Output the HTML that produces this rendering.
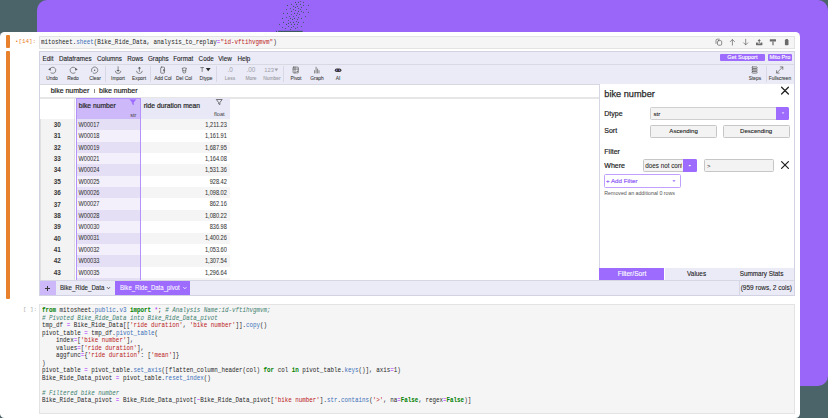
<!DOCTYPE html>
<html><head><meta charset="utf-8">
<style>
*{box-sizing:border-box;margin:0;padding:0}
html,body{width:828px;height:418px;overflow:hidden;background:#4b6469;font-family:"Liberation Sans",sans-serif;color:#333}
.a{position:absolute}
#purple{left:37px;top:-0.5px;width:791px;height:386px;border-radius:10px;background:#9a66fa}
#card{left:0;top:32px;width:800px;height:386.3px;border-radius:4.5px;background:#fff}
.obar{left:6px;width:4px;background:#e8802c;border-radius:1px}
.mono{font-family:"Liberation Mono",monospace}
.cell{background:#f5f5f5;border:1px solid #e3e3e3}
.code{font-size:6.4px;line-height:7.5px;white-space:pre;color:#262626;transform:scaleX(0.917);transform-origin:0 0}
.kw{color:#008000;font-weight:bold}
.nm{color:#3a6fb8}
.st{color:#ba2121}
.op{color:#aa22ff}
.cm{color:#3d8070;font-style:italic}
.t{white-space:nowrap;line-height:1}

.mito{left:39px;top:51.2px;width:755.7px;height:244.4px;border:1px solid #d2d2e2;background:#fff}
.menubar{left:40px;top:52.2px;width:753.7px;height:12.8px;background:#ebebf7;border-bottom:0.9px solid #d8d8e2}
.toolbar{left:40px;top:65px;width:753.7px;height:19.8px;background:#ebebf7;border-bottom:1px solid #d8d8e2}
.menu{top:55.6px;font-size:6.3px;color:#1c1c1c;-webkit-text-stroke:0.1px currentColor}
.tl{top:75.5px;width:40px;text-align:center;font-size:5.7px;color:#3a3a3a;transform:scaleX(0.86);-webkit-text-stroke:0.08px currentColor}
.dis{color:#98989f}
.sep{width:0.8px;background:#d8d8e6;top:66px;height:16px}
.ic{position:absolute;overflow:visible}
.btnp{background:#9d6cff;color:#fff;font-size:5.6px;text-align:center;line-height:7.6px;border-radius:1px;-webkit-text-stroke:0.12px currentColor}

.fbar{left:50.7px;top:87.2px;font-size:7px;color:#1e1e1e;-webkit-text-stroke:0.18px currentColor}
.gh{font-size:6.75px;color:#2a2a2a;-webkit-text-stroke:0.2px currentColor}
.gd{font-size:5.65px;color:#333;transform:scaleY(1.13);-webkit-text-stroke:0.04px currentColor}
.idx{font-size:6.4px;font-weight:bold;color:#383838;width:35px;text-align:center;left:39.8px}
</style></head><body>
<div id="purple" class="a"></div>
<svg class="a" style="left:0;top:0" width="828" height="418" viewBox="0 0 828 418"><g fill="#3f5a60"><circle cx="300.4" cy="1.5" r="0.55"/><circle cx="295.5" cy="2.4" r="0.55"/><circle cx="298.5" cy="2.4" r="0.55"/><circle cx="303.4" cy="2.4" r="0.55"/><circle cx="291.4" cy="4.4" r="0.55"/><circle cx="296.5" cy="4.4" r="0.55"/><circle cx="300.4" cy="4.4" r="0.55"/><circle cx="287.5" cy="5.4" r="0.55"/><circle cx="303.4" cy="5.4" r="0.55"/><circle cx="308.4" cy="5.4" r="0.55"/><circle cx="293.5" cy="6.4" r="0.55"/><circle cx="297.4" cy="6.4" r="0.55"/><circle cx="295.5" cy="7.4" r="0.55"/><circle cx="301.4" cy="7.4" r="0.55"/><circle cx="290.4" cy="8.5" r="0.55"/><circle cx="298.5" cy="8.5" r="0.55"/><circle cx="286.5" cy="9.5" r="0.55"/><circle cx="293.5" cy="9.5" r="0.55"/><circle cx="300.4" cy="9.5" r="0.55"/><circle cx="306.4" cy="9.5" r="0.55"/><circle cx="295.5" cy="10.5" r="0.55"/><circle cx="291.4" cy="11.4" r="0.55"/><circle cx="298.5" cy="11.4" r="0.55"/><circle cx="301.4" cy="11.4" r="0.55"/><circle cx="303.4" cy="12.4" r="0.55"/><circle cx="308.4" cy="12.4" r="0.55"/><circle cx="283.5" cy="13.4" r="0.55"/><circle cx="287.5" cy="13.4" r="0.55"/><circle cx="294.5" cy="13.4" r="0.55"/><circle cx="297.4" cy="13.4" r="0.55"/><circle cx="291.4" cy="14.5" r="0.55"/><circle cx="299.5" cy="14.5" r="0.55"/><circle cx="296.5" cy="15.5" r="0.55"/><circle cx="289.4" cy="16.5" r="0.55"/><circle cx="293.5" cy="16.5" r="0.55"/><circle cx="305.5" cy="16.5" r="0.55"/><circle cx="286.5" cy="17.5" r="0.55"/><circle cx="298.5" cy="17.5" r="0.55"/><circle cx="282.5" cy="18.4" r="0.55"/><circle cx="290.4" cy="18.4" r="0.55"/><circle cx="294.5" cy="18.4" r="0.55"/><circle cx="301.4" cy="18.4" r="0.55"/><circle cx="292.5" cy="19.4" r="0.55"/><circle cx="297.4" cy="19.4" r="0.55"/><circle cx="288.5" cy="20.5" r="0.55"/><circle cx="296.5" cy="21.5" r="0.55"/><circle cx="283.5" cy="22.4" r="0.55"/><circle cx="290.4" cy="22.4" r="0.55"/><circle cx="293.5" cy="22.4" r="0.55"/><circle cx="298.5" cy="22.4" r="0.55"/><circle cx="303.4" cy="22.4" r="0.55"/><circle cx="288.5" cy="23.4" r="0.55"/><circle cx="279.4" cy="24.4" r="0.55"/><circle cx="286.5" cy="24.4" r="0.55"/><circle cx="291.4" cy="24.4" r="0.55"/><circle cx="294.5" cy="24.4" r="0.55"/><circle cx="297.4" cy="24.4" r="0.55"/><circle cx="288.5" cy="26.5" r="0.55"/><circle cx="293.5" cy="26.5" r="0.55"/><circle cx="301.4" cy="26.5" r="0.55"/><circle cx="282.5" cy="27.5" r="0.55"/><circle cx="291.4" cy="27.5" r="0.55"/><circle cx="297.4" cy="27.5" r="0.55"/><circle cx="285.4" cy="28.5" r="0.55"/><circle cx="295.5" cy="28.5" r="0.55"/><circle cx="290.4" cy="29.5" r="0.55"/><circle cx="276.5" cy="31.4" r="0.55"/><rect x="278.2" y="30.8" width="24.5" height="1.2"/></g></svg>
<div id="card" class="a"></div>

<!-- cell 1 -->
<div class="a obar" style="top:35.4px;height:13px"></div>
<div class="a obar" style="top:51.2px;height:248px"></div>
<div class="a mono t" style="left:15px;top:38.5px;font-size:5.87px;color:#e8802c">•[14]:</div>
<div class="a cell" style="left:39px;top:35.7px;width:755.7px;height:12.9px"></div>
<div class="a mono code t" style="left:41.2px;top:39.8px">mitosheet.<span class="nm">sheet</span>(Bike_Ride_Data, analysis_to_replay<span class="op">=</span><span class="st">"id-vftihvgmvm"</span>)</div>


<!-- mito -->
<div class="a mito"></div>
<div class="a menubar"></div>
<div class="a toolbar"></div>
<div class="a t menu" style="left:42.6px">Edit</div>
<div class="a t menu" style="left:59px">Dataframes</div>
<div class="a t menu" style="left:97px">Columns</div>
<div class="a t menu" style="left:127.3px">Rows</div>
<div class="a t menu" style="left:147.9px">Graphs</div>
<div class="a t menu" style="left:173.2px">Format</div>
<div class="a t menu" style="left:198.6px">Code</div>
<div class="a t menu" style="left:218.2px">View</div>
<div class="a t menu" style="left:237.4px">Help</div>
<div class="a t tl" style="left:32.3px">Undo</div>
<div class="a t tl" style="left:53.4px">Redo</div>
<div class="a t tl" style="left:74.6px">Clear</div>
<div class="a t tl" style="left:98.0px">Import</div>
<div class="a t tl" style="left:119.4px">Export</div>
<div class="a t tl" style="left:143.2px">Add Col</div>
<div class="a t tl" style="left:164.3px">Del Col</div>
<div class="a t tl" style="left:185.5px">Dtype</div>
<div class="a t tl dis" style="left:209.6px">Less</div>
<div class="a t tl dis" style="left:231.3px">More</div>
<div class="a t tl dis" style="left:251.6px">Number</div>
<div class="a t tl" style="left:275.6px">Pivot</div>
<div class="a t tl" style="left:296.7px">Graph</div>
<div class="a t tl" style="left:318.0px">AI</div>
<div class="a t tl" style="left:734.5px">Steps</div>
<div class="a t tl" style="left:759.9px">Fullscreen</div>
<div class="a sep" style="left:105.4px"></div>
<div class="a sep" style="left:150px"></div>
<div class="a sep" style="left:216.4px"></div>
<div class="a sep" style="left:282.9px"></div>
<div class="a sep" style="left:765.7px"></div>
<div class="a btnp" style="left:720.1px;top:53.7px;width:44.7px;height:7.6px">Get Support</div>
<div class="a btnp" style="left:767.7px;top:53.7px;width:24.4px;height:7.6px">Mito Pro</div>

<div class="a t" style="left:227.4px;top:67.3px;font-size:6.4px;color:#a0a0a8">.0</div>
<div class="a t" style="left:246.4px;top:67.3px;font-size:6.4px;color:#a0a0a8">.00</div>
<div class="a t" style="left:264.2px;top:67.9px;font-size:5.8px;color:#a0a0a8">123</div>
<!-- formula bar -->
<div class="a t fbar">bike number</div>
<div class="a" style="left:93.9px;top:88.9px;width:0.6px;height:3.8px;background:#888"></div>
<div class="a t fbar" style="left:99px">bike number</div>
<!-- grid -->
<div class="a" style="left:40px;top:97.3px;width:559.4px;height:1.3px;background:#e6e6e6"></div>
<div class="a" style="left:74.3px;top:98.4px;width:0.8px;height:21px;background:#e6e6e6"></div>
<div class="a" style="left:39.5px;top:119px;width:35.6px;height:161.3px;background:#f3f3f3;border-right:0.8px solid #dedede;border-left:0.6px solid #e0e0e0"></div>
<div class="a" style="left:76px;top:98.4px;width:65px;height:20.3px;background:#cdb9fa"></div>
<div class="a" style="left:141px;top:98.4px;width:88.8px;height:20.3px;background:#e8e8f6"></div>
<div class="a" style="left:76px;top:118.85px;width:65px;height:11.37px;background:#e5dff6"></div>
<div class="a" style="left:141px;top:118.85px;width:88.8px;height:11.37px;background:#f5f5f5"></div>
<div class="a t idx" style="top:121.94px">30</div>
<div class="a t gd" style="left:78.5px;top:122.78px">W00017</div>
<div class="a t gd" style="left:140px;width:86.9px;text-align:right;top:122.78px">1,211.23</div>
<div class="a" style="left:76px;top:130.22px;width:65px;height:11.37px;background:#f3f0fc"></div>
<div class="a" style="left:141px;top:130.22px;width:88.8px;height:11.37px;background:#fff"></div>
<div class="a t idx" style="top:133.31px">31</div>
<div class="a t gd" style="left:78.5px;top:134.16px">W00018</div>
<div class="a t gd" style="left:140px;width:86.9px;text-align:right;top:134.16px">1,161.91</div>
<div class="a" style="left:76px;top:141.59px;width:65px;height:11.37px;background:#e5dff6"></div>
<div class="a" style="left:141px;top:141.59px;width:88.8px;height:11.37px;background:#f5f5f5"></div>
<div class="a t idx" style="top:144.68px">32</div>
<div class="a t gd" style="left:78.5px;top:145.53px">W00019</div>
<div class="a t gd" style="left:140px;width:86.9px;text-align:right;top:145.53px">1,687.95</div>
<div class="a" style="left:76px;top:152.96px;width:65px;height:11.37px;background:#f3f0fc"></div>
<div class="a" style="left:141px;top:152.96px;width:88.8px;height:11.37px;background:#fff"></div>
<div class="a t idx" style="top:156.04px">33</div>
<div class="a t gd" style="left:78.5px;top:156.89px">W00021</div>
<div class="a t gd" style="left:140px;width:86.9px;text-align:right;top:156.89px">1,164.08</div>
<div class="a" style="left:76px;top:164.33px;width:65px;height:11.37px;background:#e5dff6"></div>
<div class="a" style="left:141px;top:164.33px;width:88.8px;height:11.37px;background:#f5f5f5"></div>
<div class="a t idx" style="top:167.41px">34</div>
<div class="a t gd" style="left:78.5px;top:168.26px">W00024</div>
<div class="a t gd" style="left:140px;width:86.9px;text-align:right;top:168.26px">1,531.36</div>
<div class="a" style="left:76px;top:175.70px;width:65px;height:11.37px;background:#f3f0fc"></div>
<div class="a" style="left:141px;top:175.70px;width:88.8px;height:11.37px;background:#fff"></div>
<div class="a t idx" style="top:178.78px">35</div>
<div class="a t gd" style="left:78.5px;top:179.63px">W00025</div>
<div class="a t gd" style="left:140px;width:86.9px;text-align:right;top:179.63px">928.42</div>
<div class="a" style="left:76px;top:187.07px;width:65px;height:11.37px;background:#e5dff6"></div>
<div class="a" style="left:141px;top:187.07px;width:88.8px;height:11.37px;background:#f5f5f5"></div>
<div class="a t idx" style="top:190.16px">36</div>
<div class="a t gd" style="left:78.5px;top:191.00px">W00026</div>
<div class="a t gd" style="left:140px;width:86.9px;text-align:right;top:191.00px">1,098.02</div>
<div class="a" style="left:76px;top:198.44px;width:65px;height:11.37px;background:#f3f0fc"></div>
<div class="a" style="left:141px;top:198.44px;width:88.8px;height:11.37px;background:#fff"></div>
<div class="a t idx" style="top:201.53px">37</div>
<div class="a t gd" style="left:78.5px;top:202.38px">W00027</div>
<div class="a t gd" style="left:140px;width:86.9px;text-align:right;top:202.38px">862.16</div>
<div class="a" style="left:76px;top:209.81px;width:65px;height:11.37px;background:#e5dff6"></div>
<div class="a" style="left:141px;top:209.81px;width:88.8px;height:11.37px;background:#f5f5f5"></div>
<div class="a t idx" style="top:212.90px">38</div>
<div class="a t gd" style="left:78.5px;top:213.75px">W00028</div>
<div class="a t gd" style="left:140px;width:86.9px;text-align:right;top:213.75px">1,080.22</div>
<div class="a" style="left:76px;top:221.18px;width:65px;height:11.37px;background:#f3f0fc"></div>
<div class="a" style="left:141px;top:221.18px;width:88.8px;height:11.37px;background:#fff"></div>
<div class="a t idx" style="top:224.27px">39</div>
<div class="a t gd" style="left:78.5px;top:225.12px">W00030</div>
<div class="a t gd" style="left:140px;width:86.9px;text-align:right;top:225.12px">836.98</div>
<div class="a" style="left:76px;top:232.55px;width:65px;height:11.37px;background:#e5dff6"></div>
<div class="a" style="left:141px;top:232.55px;width:88.8px;height:11.37px;background:#f5f5f5"></div>
<div class="a t idx" style="top:235.63px">40</div>
<div class="a t gd" style="left:78.5px;top:236.48px">W00031</div>
<div class="a t gd" style="left:140px;width:86.9px;text-align:right;top:236.48px">1,400.26</div>
<div class="a" style="left:76px;top:243.92px;width:65px;height:11.37px;background:#f3f0fc"></div>
<div class="a" style="left:141px;top:243.92px;width:88.8px;height:11.37px;background:#fff"></div>
<div class="a t idx" style="top:247.00px">41</div>
<div class="a t gd" style="left:78.5px;top:247.85px">W00032</div>
<div class="a t gd" style="left:140px;width:86.9px;text-align:right;top:247.85px">1,053.60</div>
<div class="a" style="left:76px;top:255.29px;width:65px;height:11.37px;background:#e5dff6"></div>
<div class="a" style="left:141px;top:255.29px;width:88.8px;height:11.37px;background:#f5f5f5"></div>
<div class="a t idx" style="top:258.37px">42</div>
<div class="a t gd" style="left:78.5px;top:259.22px">W00033</div>
<div class="a t gd" style="left:140px;width:86.9px;text-align:right;top:259.22px">1,307.54</div>
<div class="a" style="left:76px;top:266.66px;width:65px;height:11.37px;background:#f3f0fc"></div>
<div class="a" style="left:141px;top:266.66px;width:88.8px;height:11.37px;background:#fff"></div>
<div class="a t idx" style="top:269.74px">43</div>
<div class="a t gd" style="left:78.5px;top:270.59px">W00035</div>
<div class="a t gd" style="left:140px;width:86.9px;text-align:right;top:270.59px">1,296.64</div>
<div class="a" style="left:76px;top:278.03px;width:65px;height:2.27px;background:#e5dff6"></div>
<div class="a" style="left:141px;top:278.03px;width:88.8px;height:2.27px;background:#f5f5f5"></div>
<div class="a" style="left:75.5px;top:98.4px;width:65.6px;height:182px;border:0.8px solid #b392fb;border-bottom:none"></div>
<div class="a t gh" style="left:78.7px;top:103.1px;width:40px">bike number</div>
<div class="a t" style="left:120px;width:16.4px;text-align:right;top:112.6px;font-size:5.6px;color:#444">str</div>
<div class="a t gh" style="left:143.8px;top:103.2px">ride duration mean</div>
<div class="a t" style="left:200px;width:24.7px;text-align:right;top:111.5px;font-size:5.7px;color:#444">float</div>

<div class="a" style="left:40px;top:280.3px;width:753.7px;height:15.1px;background:#ebebf7;border-top:0.8px solid #d6d6e4"></div>
<div class="a" style="left:40px;top:280.8px;width:15.8px;height:14.6px;background:#cdb9fa"></div>
<div class="a" style="left:44.9px;top:287.6px;width:5px;height:0.8px;background:#3a3a3a"></div><div class="a" style="left:47px;top:285.5px;width:0.8px;height:5px;background:#3a3a3a"></div>
<div class="a t" style="left:60.4px;top:284.9px;font-size:6.4px;color:#262626;transform:scaleX(0.96);transform-origin:0 0;-webkit-text-stroke:0.1px currentColor">Bike_Ride_Data</div>
<div class="a" style="left:115px;top:280.8px;width:75.3px;height:14.6px;background:#9d6cff"></div>
<div class="a t" style="left:119.5px;top:284.9px;font-size:6.4px;color:#fff;transform:scaleX(0.945);transform-origin:0 0;-webkit-text-stroke:0.06px currentColor">Bike_Ride_Data_pivot</div>
<div class="a" style="left:738.6px;top:281px;width:0.8px;height:14.4px;background:#d6d6e4"></div>
<div class="a t" style="left:740.7px;top:284.5px;font-size:6.5px;color:#222;-webkit-text-stroke:0.08px currentColor">(959 rows, 2 cols)</div>

<div class="a" style="left:599.4px;top:83.6px;width:194.3px;height:196.7px;background:#fff;border-left:0.8px solid #d6d6e4"></div>
<div class="a t" style="left:604.3px;top:89.9px;font-size:9.2px;color:#2a2a2a;-webkit-text-stroke:0.25px currentColor">bike number</div>
<div class="a t" style="left:604.3px;top:110px;font-size:7px;color:#222;-webkit-text-stroke:0.18px currentColor">Dtype</div>
<div class="a" style="left:650.2px;top:106.5px;width:139.2px;height:13.2px;background:#f3f3f3;border:0.8px solid #cfcfcf;border-radius:1.5px"></div>
<div class="a" style="left:776.3px;top:106.5px;width:13.1px;height:13.2px;background:#9d6cff;border-radius:0 1.5px 1.5px 0"></div>
<div class="a t" style="left:653.5px;top:110.5px;font-size:6px;color:#222;-webkit-text-stroke:0.1px currentColor">str</div>
<div class="a t" style="left:604.3px;top:127.3px;font-size:7px;color:#222;-webkit-text-stroke:0.18px currentColor">Sort</div>
<div class="a" style="left:650.2px;top:124.5px;width:66.8px;height:13.2px;background:#f3f3f3;border:0.8px solid #c6c6c6;border-radius:1.5px"></div>
<div class="a t" style="left:650.2px;width:66.8px;text-align:center;top:128.1px;font-size:6.1px;color:#222;-webkit-text-stroke:0.1px currentColor">Ascending</div>
<div class="a" style="left:722.8px;top:124.5px;width:66.8px;height:13.2px;background:#f3f3f3;border:0.8px solid #c6c6c6;border-radius:1.5px"></div>
<div class="a t" style="left:722.8px;width:66.6px;text-align:center;top:128.1px;font-size:6.1px;color:#222;-webkit-text-stroke:0.1px currentColor">Descending</div>
<div class="a t" style="left:604.3px;top:147.8px;font-size:7px;color:#222;-webkit-text-stroke:0.18px currentColor">Filter</div>
<div class="a t" style="left:604.3px;top:161.8px;font-size:7px;color:#222;-webkit-text-stroke:0.18px currentColor">Where</div>
<div class="a" style="left:643px;top:159.1px;width:53.7px;height:13px;background:#f3f3f3;border:0.8px solid #c6c6c6;border-radius:1.5px;overflow:hidden"></div>
<div class="a t" style="left:645.3px;top:162.6px;font-size:6.3px;color:#222;width:37px;overflow:hidden;-webkit-text-stroke:0.05px currentColor">does not contain</div>
<div class="a" style="left:683px;top:159.1px;width:13.7px;height:13px;background:#9d6cff;border-radius:0 1.5px 1.5px 0"></div>
<div class="a" style="left:704.2px;top:159.1px;width:69.4px;height:13px;background:#f3f3f3;border:0.8px solid #c6c6c6;border-radius:1.5px"></div>
<div class="a t" style="left:707px;top:162.9px;font-size:6px;color:#222">&gt;</div>
<div class="a" style="left:603.5px;top:174px;width:77.9px;height:13.6px;background:#fff;border:0.9px solid #c0a0ff;border-radius:1.5px"></div>
<div class="a t" style="left:606px;top:177.8px;font-size:6.2px;color:#8f5cf7;-webkit-text-stroke:0.18px currentColor">+ Add Filter</div>
<div class="a t" style="left:604.3px;top:191.3px;font-size:5.25px;color:#555">Removed an additional 0 rows</div>
<div class="a" style="left:599.4px;top:267.5px;width:65.1px;height:12.8px;background:#9d6cff"></div>
<div class="a" style="left:664.5px;top:267.5px;width:129.2px;height:12.8px;background:#ebebf7"></div>
<div class="a t" style="left:599.4px;width:65.1px;text-align:center;top:270.9px;font-size:6.6px;color:#fff;-webkit-text-stroke:0.1px currentColor">Filter/Sort</div>
<div class="a t" style="left:666.6px;width:60px;text-align:center;top:270.9px;font-size:6.4px;color:#222;-webkit-text-stroke:0.1px currentColor">Values</div>
<div class="a t" style="left:731px;width:61px;text-align:center;top:270.9px;font-size:6.4px;color:#222;-webkit-text-stroke:0.1px currentColor">Summary Stats</div>

<div class="a mono t" style="left:23px;top:307.2px;font-size:5.87px;color:#aaa">[ ]:</div>
<div class="a cell" style="left:39px;top:303.6px;width:755.7px;height:110.2px"></div>
<div class="a mono code" style="left:41.7px;top:307.1px"><span class="kw">from</span> mitosheet.<span class="nm">public</span>.<span class="nm">v3</span> <span class="kw">import</span> <span class="op">*</span>; <span class="cm"># Analysis Name:id-vftihvgmvm;</span>
<span class="cm"># Pivoted Bike_Ride_Data into Bike_Ride_Data_pivot</span>
tmp_df <span class="op">=</span> Bike_Ride_Data[[<span class="st">'ride duration'</span>, <span class="st">'bike number'</span>]].<span class="nm">copy</span>()
pivot_table <span class="op">=</span> tmp_df.<span class="nm">pivot_table</span>(
    index<span class="op">=</span>[<span class="st">'bike number'</span>],
    values<span class="op">=</span>[<span class="st">'ride duration'</span>],
    aggfunc<span class="op">=</span>{<span class="st">'ride duration'</span>: [<span class="st">'mean'</span>]}
)
pivot_table <span class="op">=</span> pivot_table.<span class="nm">set_axis</span>([flatten_column_header(col) <span class="kw">for</span> col <span class="kw">in</span> pivot_table.<span class="nm">keys</span>()], axis<span class="op">=</span>1)
Bike_Ride_Data_pivot <span class="op">=</span> pivot_table.<span class="nm">reset_index</span>()

<span class="cm"># Filtered bike number</span>
Bike_Ride_Data_pivot <span class="op">=</span> Bike_Ride_Data_pivot[<span class="op">~</span>Bike_Ride_Data_pivot[<span class="st">'bike number'</span>].<span class="nm">str</span>.<span class="nm">contains</span>(<span class="st">'&gt;'</span>, na<span class="op">=</span><span class="kw">False</span>, regex<span class="op">=</span><span class="kw">False</span>)]</div>
<svg class="a" style="left:0;top:0" width="828" height="418" viewBox="0 0 828 418">
<g fill="none" stroke="#5a5a5a" stroke-width="0.7" stroke-linecap="round" stroke-linejoin="round">
<!-- undo -->
<path d="M49.79,69.24 A3.1,3.1 0 1 1 50.92,72.84"/>
<!-- redo -->
<path d="M76.11,69.24 A3.1,3.1 0 1 0 74.98,72.84"/>
<!-- clear -->
<path d="M91.83,71.80 A3.2,3.2 0 1 1 93.25,73.10"/>
<!-- import -->
<path d="M118.1,66.7 V70.2"/><path d="M115.3,71.2 Q115.5,73.5 118.1,73.5 Q120.7,73.5 120.9,71.2"/>
<!-- export -->
<path d="M139.4,68.2 V71.4"/><path d="M136.5,71.2 Q136.7,73.5 139.4,73.5 Q142.1,73.5 142.3,71.2"/>
<!-- add col -->
<rect x="160.7" y="67.1" width="3.8" height="6.1" rx="0.8"/>
<!-- del col -->
<path d="M182.1,68.3 Q184.3,67.1 186.5,68.3 M182.6,68.8 L183,72.6 Q184.3,73.5 185.6,72.6 L186,68.8 M183,70.6 Q184.3,71.2 185.6,70.6"/>
<!-- pivot -->
<rect x="293.1" y="67.1" width="5.2" height="5.8" rx="0.5"/><path d="M293.1,69.1 H298.3 M295,67.1 V72.9"/>
<!-- graph -->
<path d="M314.6,73 V70.6 M316.1,73 V67.2 M317.6,73 V69 M319,73 V70.6"/>
<!-- steps -->
<rect x="752" y="66.9" width="5.2" height="1.6" rx="0.6"/><rect x="752" y="69.2" width="5.2" height="1.6" rx="0.6"/><rect x="752" y="71.5" width="5.2" height="1.6" rx="0.6"/>
<!-- fullscreen -->
<path d="M776.8,72.9 L782.6,67.1 M776.6,70.6 V73.1 H779.1 M780.3,66.9 H782.8 V69.4"/>
<!-- T -->
<path d="M200.7,67.6 H203.6 M202.15,67.6 V71.6"/>
</g>
<g fill="#5a5a5a">
<path d="M48.19,69.54 L50.69,67.74 L50.69,70.84 Z"/>
<path d="M77.71,69.54 L75.21,67.74 L75.21,70.84 Z"/>
<circle cx="94.6" cy="70.2" r="0.75"/>
<path d="M116.4,70 H119.8 L118.1,71.8 Z"/>
<path d="M137.7,68.6 H141.1 L139.4,66.8 Z"/>
<path d="M163.3,69 L165.3,70.2 L163.3,71.4 Z"/>
<path d="M296.2,72 L297.8,70.4 L297.8,72 Z"/>
<path d="M205.8,68.1 H210.6 L208.2,71.2 Z" fill="#2a2a2a"/>

<path d="M274.4,68.6 H278.2 L276.3,71.2 Z" fill="#a0a0a8"/>
<!-- ai pill -->
<rect x="334.8" y="68.4" width="6.6" height="3.5" rx="1.75" fill="#3a3a3a"/>
</g>
<g fill="#b18cff"><circle cx="336.6" cy="70.15" r="0.6"/><circle cx="339.6" cy="70.15" r="0.6"/></g>
<!-- cell toolbar icons -->
<g fill="none" stroke="#6a6a6a" stroke-width="0.75" stroke-linecap="round" stroke-linejoin="round">
<path d="M716,43.4 V40.4 Q716,39.2 717.2,39.2 H719.4"/><rect x="717.5" y="40.6" width="4.2" height="4.6" rx="1.1"/>
<path d="M732.4,45.1 V39.6 M730.3,41.6 L732.4,39.5 L734.5,41.6"/>
<path d="M745.7,39.3 V44.8 M743.6,42.8 L745.7,44.9 L747.8,42.8"/>
</g>
<g fill="#6a6a6a">
<path d="M759.2,39.1 L757.5,40.9 H758.7 V42.9 H759.7 V40.9 H760.9 Z"/><path d="M756,42.8 Q756,42.4 756.4,42.4 H757.8 V43.6 H760.6 V42.4 H762,Q762.4,42.4 762.4,42.8 V44.8 Q762.4,45.2 762,45.2 H756.4 Q756,45.2 756,44.8 Z"/>
<path d="M769.8,39.6 Q769.8,39.2 770.2,39.2 H775.6 Q776,39.2 776,39.6 V41.2 Q776,41.6 775.6,41.6 H770.2 Q769.8,41.6 769.8,41.2 Z"/><path d="M772.4,41.4 H773.6 V45.2 H772.4 Z"/>
<rect x="784.9" y="39.8" width="3.6" height="5.4" rx="0.7"/><rect x="785.5" y="39.1" width="2.4" height="0.9" rx="0.3"/>
</g>
<!-- filter icons in header -->
<path d="M129.8,99.4 H136 L133.6,102.5 V104.9 L132.2,104 V102.5 Z" fill="#9d6cff" stroke="#9d6cff" stroke-width="0.3" stroke-linejoin="round"/>
<path d="M216.3,99.5 H222.2 L219.9,102.5 V104.6 L218.6,103.8 V102.5 Z" fill="none" stroke="#444" stroke-width="0.7" stroke-linejoin="round"/>
<!-- close X -->
<g stroke="#222" stroke-width="1.25" stroke-linecap="round">
<path d="M781.6,87.2 L788.4,94 M788.4,87.2 L781.6,94"/>
<path d="M781.6,161.6 L788.4,168.4 M788.4,161.6 L781.6,168.4"/>
</g>
<!-- dropdown chevrons -->
<g fill="#fff"><path d="M781.6,112.4 H784.4 L783,113.8 Z"/><path d="M688.4,165 H691.2 L689.8,166.5 Z"/></g>
<path d="M672.4,180.2 H675.6 L674,182 Z" fill="#9d6cff"/>
<g fill="none" stroke="#333" stroke-width="0.75" stroke-linecap="round" stroke-linejoin="round"><path d="M107.2,287.4 L108.5,288.8 L109.8,287.4"/></g>
<g fill="none" stroke="#fff" stroke-width="0.75" stroke-linecap="round" stroke-linejoin="round"><path d="M183.6,287.4 L184.9,288.8 L186.2,287.4"/></g>
</svg>
</body></html>
